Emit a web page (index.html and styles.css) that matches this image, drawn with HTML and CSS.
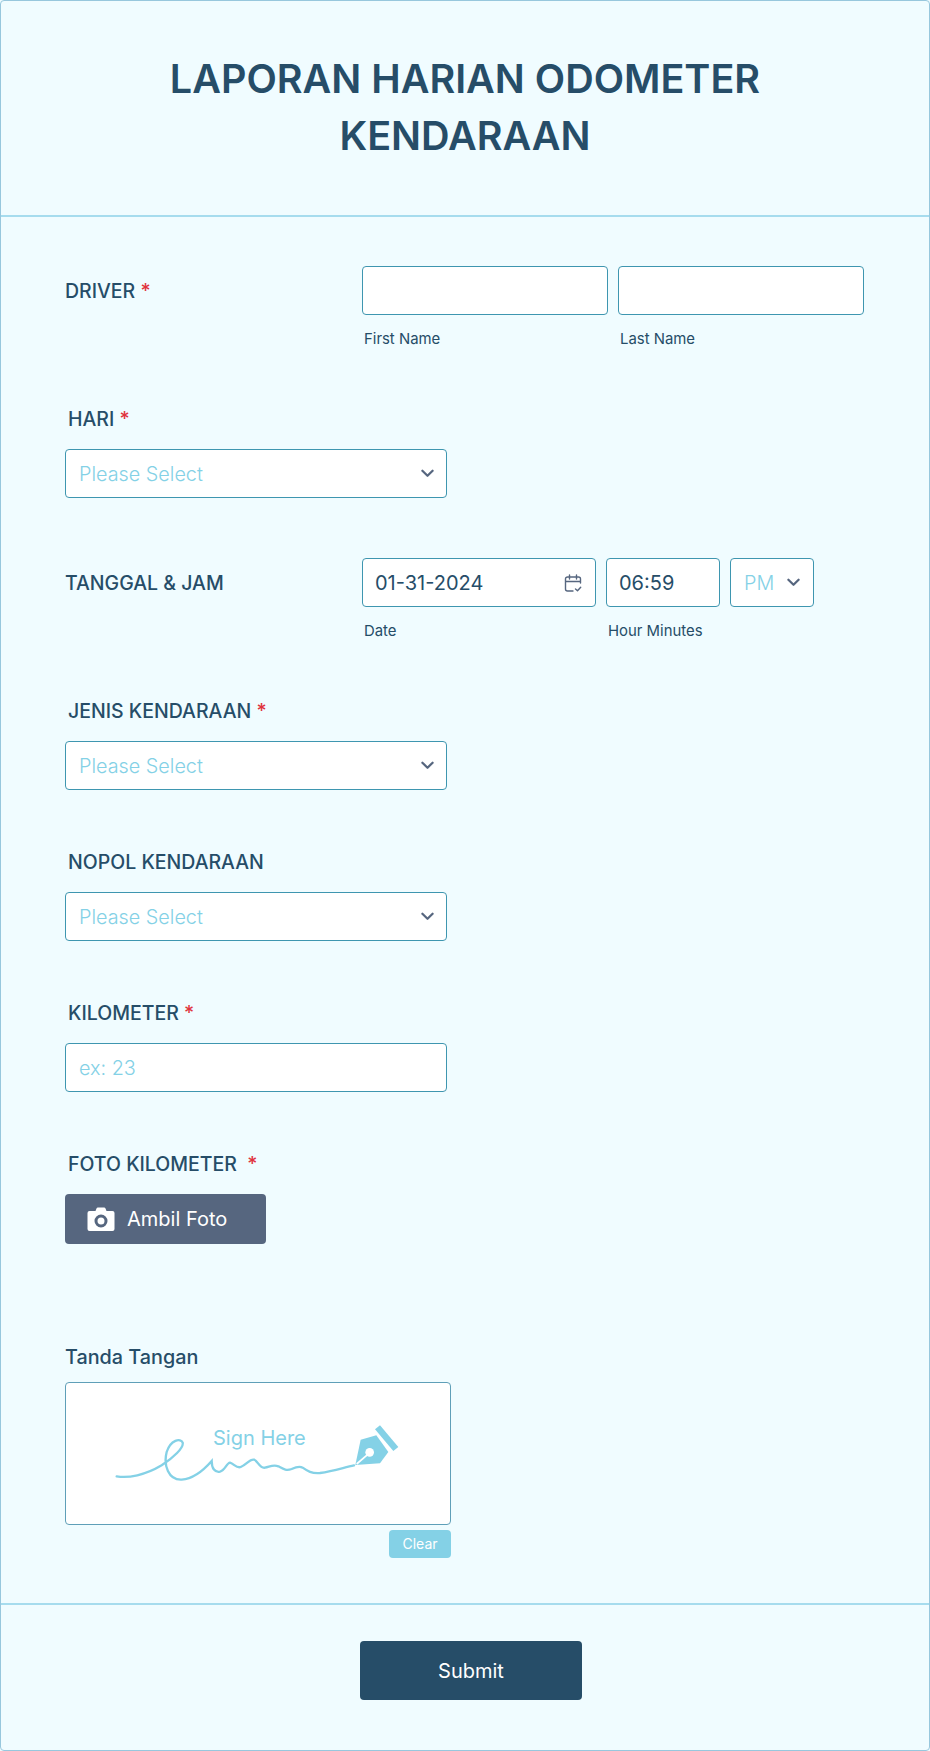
FILE: index.html
```html
<!DOCTYPE html>
<html lang="id">
<head>
<meta charset="utf-8">
<title>Laporan Harian Odometer Kendaraan</title>
<link rel="stylesheet" href="styles.css">
</head>
<body>
<form class="form">
  <header class="form-header">
    <h1 class="title">LAPORAN HARIAN ODOMETER KENDARAAN</h1>
  </header>
  <section class="form-body">
    <div class="row row-driver">
      <div class="side-label">DRIVER <span class="req">*</span></div>
      <div class="name-fields">
        <div class="col">
          <div class="box box-name"></div>
          <div class="sub">First Name</div>
        </div>
        <div class="col">
          <div class="box box-name"></div>
          <div class="sub">Last Name</div>
        </div>
      </div>
    </div>

    <div class="stack">
      <div class="top-label">HARI <span class="req">*</span></div>
      <div class="box box-wide">
        <span class="ph">Please Select</span>
        <svg class="chev chev-wide" viewBox="0 0 14 9"><path d="M1.500 1.500 7 7l5.500-5.500"/></svg>
      </div>
    </div>

    <div class="row row-date">
      <div class="side-label">TANGGAL &amp; JAM</div>
      <div class="date-fields">
        <div class="col">
          <div class="box box-date">
            <span class="val">01-31-2024</span>
            <svg class="cal" viewBox="0 0 18 18"><path d="M16.500 9V5a2 2 0 0 0-2-2h-11a2 2 0 0 0-2 2v10a2 2 0 0 0 2 2H9M1.500 7.500h15M5.500 1v4M12.500 1v4M11.500 15l2 1.800 3.200-3.600"/></svg>
          </div>
          <div class="sub">Date</div>
        </div>
        <div class="col">
          <div class="box box-time"><span class="val">06:59</span></div>
          <div class="sub sub-nowrap">Hour Minutes</div>
        </div>
        <div class="col">
          <div class="box box-ampm">
            <span class="ph">PM</span>
            <svg class="chev" viewBox="0 0 14 9"><path d="M1.500 1.500 7 7l5.500-5.500"/></svg>
          </div>
        </div>
      </div>
    </div>

    <div class="stack">
      <div class="top-label">JENIS KENDARAAN <span class="req">*</span></div>
      <div class="box box-wide">
        <span class="ph">Please Select</span>
        <svg class="chev chev-wide" viewBox="0 0 14 9"><path d="M1.500 1.500 7 7l5.500-5.500"/></svg>
      </div>
    </div>

    <div class="stack">
      <div class="top-label">NOPOL KENDARAAN</div>
      <div class="box box-wide">
        <span class="ph">Please Select</span>
        <svg class="chev chev-wide" viewBox="0 0 14 9"><path d="M1.500 1.500 7 7l5.500-5.500"/></svg>
      </div>
    </div>

    <div class="stack">
      <div class="top-label">KILOMETER <span class="req">*</span></div>
      <div class="box box-wide"><span class="ph">ex: 23</span></div>
    </div>

    <div class="stack">
      <div class="top-label">FOTO KILOMETER <span class="req req-gap">*</span></div>
      <div class="photo-btn">
        <svg class="camera" viewBox="0 0 28 24"><path fill-rule="evenodd" d="M9.500 1.500A1.500 1.500 0 0 1 11 .5h6a1.500 1.500 0 0 1 1.500 1L19.500 4H25.500A2 2 0 0 1 27.500 6V22A2 2 0 0 1 25.500 24H2.500A2 2 0 0 1 .5 22V6A2 2 0 0 1 2.500 4H8.500ZM14 7.500a6.500 6.500 0 1 0 0 13 6.500 6.500 0 0 0 0-13ZM14 10.500a3.500 3.500 0 1 1 0 7 3.500 3.500 0 0 1 0-7Z"/></svg>
        <span>Ambil Foto</span>
      </div>
    </div>

    <div class="stack stack-sign">
      <div class="sign-label">Tanda Tangan</div>
      <div class="sign-box">
        <span class="sign-text">Sign Here</span>
        <svg class="sign-art" viewBox="49 128 1150 423">
          <path class="stroke" d="M200 408C235 414 285 405 335 375C370 352 402 322 398 307C392 292 362 298 350 335C340 375 355 420 395 418C435 415 465 385 485 362C485 385 495 397 510 394C525 390 530 368 540 367C552 370 560 385 572 380C590 372 600 355 612 358C625 362 628 385 645 382C660 379 670 372 685 378C700 386 708 392 725 386C738 380 748 376 758 382C772 392 785 400 810 398C850 392 880 382 912 375"/>
          <path class="nib" d="M932 298 979 285 1015 335 990 369 916 374Z"/>
          <path class="slit" d="M920 371 957 339"/>
          <circle class="hole" cx="959" cy="336" r="13"/>
          <path class="nib" d="M975 267 990 255 1045 320 1030 332Z"/>
        </svg>
      </div>
      <div class="clear-wrap"><span class="clear">Clear</span></div>
    </div>
  </section>
  <footer class="form-footer">
    <button class="submit" type="button">Submit</button>
  </footer>
</form>
</body>
</html>
```
FILE: styles.css
```css
* { box-sizing: border-box; }
html, body { margin: 0; padding: 0; }
body { background: #f0fcff; font-family: "Inter", "Liberation Sans", sans-serif; color: #264d68; }
.form { width: 930px; height: 1751px; display: flex; flex-direction: column; border: 1px solid #97c7dd; border-radius: 4px; background: #f0fcff; }
.form-header { height: 216px; border-bottom: 2px solid #a6dcee; padding-top: 50px; }
.title { margin: 0 auto; width: 760px; text-align: center; font-size: 39.5px; line-height: 57px; font-weight: 600; color: #264d68; }
.form-body { flex: 1; padding: 49px 0 0 64px; }
.row { display: flex; }
.row-date { margin-top: 60px; }
.side-label { width: 297px; padding-top: 14px; font-size: 19.5px; line-height: 22px; font-weight: 450; }
.top-label { padding-left: 3px; font-size: 19.5px; line-height: 21px; font-weight: 450; margin-bottom: 19px; }
.req { color: #e0333c; }
.req-gap { margin-left: 5px; }
.name-fields, .date-fields { display: flex; gap: 10px; }
.box { display: flex; align-items: center; justify-content: space-between; height: 49px; background: #fff; border: 1px solid #3e96b0; border-radius: 4px; padding: 0 13px; font-size: 20px; }
.box-name { width: 246px; }
.box-wide { width: 382px; }
.box-date { width: 234px; }
.box-time { width: 114px; }
.box-ampm { width: 84px; }
.sub { margin-top: 16px; padding-left: 2px; font-size: 14.9px; line-height: 16px; color: #264d68; }
.sub-nowrap { white-space: nowrap; }
.ph { color: #84d1e6; font-weight: 300; font-size: 19.8px; }
.val { color: #264d68; font-weight: 400; margin-left: -1px; }
.chev { width: 13px; height: 9px; fill: none; stroke: #56667f; stroke-width: 2.400; stroke-linecap: round; stroke-linejoin: round; }
.chev-wide { margin-right: -1px; }
.cal { width: 18px; height: 18px; fill: none; stroke: #56667f; stroke-width: 1.400; stroke-linecap: round; stroke-linejoin: round; }
.stack { margin-top: 62px; }
.stack-sign { margin-top: 102px; }
.photo-btn { display: flex; align-items: center; gap: 12px; width: 201px; height: 50px; padding-left: 22px; background: #56667f; border-radius: 4px; color: #fff; font-size: 20px; }
.camera { width: 28px; height: 24px; fill: #fff; }
.sign-label { font-size: 19.8px; line-height: 23px; font-weight: 450; margin-bottom: 13px; }
.sign-box { position: relative; width: 386px; height: 143px; background: #fff; border: 1px solid #5f9fb8; border-radius: 4px; }
.sign-art { display: block; width: 100%; height: 100%; }
.stroke { fill: none; stroke: #84d1e6; stroke-width: 7; stroke-linecap: round; }
.nib { fill: #84d1e6; }
.slit { fill: none; stroke: #fff; stroke-width: 5; }
.hole { fill: #fff; }
.sign-text { position: absolute; left: 147px; top: 42px; font-size: 20px; line-height: 26px; color: #84d1e6; }
.clear-wrap { display: flex; justify-content: flex-end; width: 386px; margin-top: 5px; }
.clear { display: block; width: 62px; height: 28px; background: #84d1e6; border-radius: 4px; color: #fff; font-size: 14px; line-height: 28px; text-align: center; }
.form-footer { height: 147px; border-top: 2px solid #a6dcee; padding-top: 36px; padding-left: 359px; }
.submit { display: block; width: 222px; height: 59px; background: #264d68; border: 0; border-radius: 4px; color: #fff; font: 400 20px "Inter", "Liberation Sans", sans-serif; padding: 0; }
```
